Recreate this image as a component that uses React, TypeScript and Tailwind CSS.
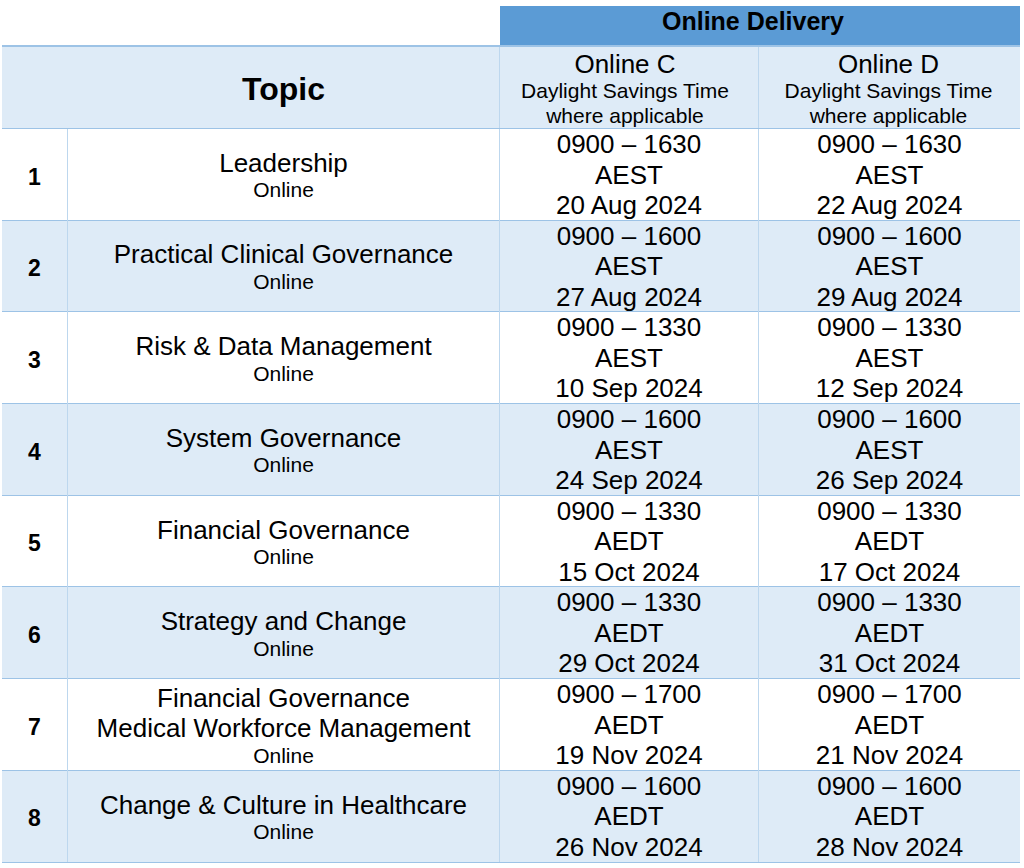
const rows = [
  { n: 1, topic: ['Leadership'], c: ['0900 – 1630', 'AEST', '20 Aug 2024'], d: ['0900 – 1630', 'AEST', '22 Aug 2024'] },
  { n: 2, topic: ['Practical Clinical Governance'], c: ['0900 – 1600', 'AEST', '27 Aug 2024'], d: ['0900 – 1600', 'AEST', '29 Aug 2024'] },
  { n: 3, topic: ['Risk & Data Management'], c: ['0900 – 1330', 'AEST', '10 Sep 2024'], d: ['0900 – 1330', 'AEST', '12 Sep 2024'] },
  { n: 4, topic: ['System Governance'], c: ['0900 – 1600', 'AEST', '24 Sep 2024'], d: ['0900 – 1600', 'AEST', '26 Sep 2024'] },
  { n: 5, topic: ['Financial Governance'], c: ['0900 – 1330', 'AEDT', '15 Oct 2024'], d: ['0900 – 1330', 'AEDT', '17 Oct 2024'] },
  { n: 6, topic: ['Strategy and Change'], c: ['0900 – 1330', 'AEDT', '29 Oct 2024'], d: ['0900 – 1330', 'AEDT', '31 Oct 2024'] },
  { n: 7, topic: ['Financial Governance', 'Medical Workforce Management'], c: ['0900 – 1700', 'AEDT', '19 Nov 2024'], d: ['0900 – 1700', 'AEDT', '21 Nov 2024'] },
  { n: 8, topic: ['Change & Culture in Healthcare'], c: ['0900 – 1600', 'AEDT', '26 Nov 2024'], d: ['0900 – 1600', 'AEDT', '28 Nov 2024'] },
];

const cols = 'grid grid-cols-[66px_432px_259px_261px]';

function TimeCell({ lines, last }: { lines: string[]; last?: boolean }) {
  return (
    <div className={`flex flex-col items-center justify-center ${last ? '' : 'border-r border-[#bdd7ee]'}`}>
      {lines.map((l) => (
        <div key={l} className="text-[26px] leading-[30.5px] whitespace-nowrap">
          {l}
        </div>
      ))}
    </div>
  );
}

export default function App() {
  return (
    <div className="min-h-[868px] bg-white pl-[2px] pt-[6px] font-['Liberation_Sans',Arial,sans-serif] text-black">
      <div className="w-[1018px]">
        {/* Online Delivery band */}
        <div className={cols}>
          <div className="col-span-2" />
          <div className="col-span-2 flex h-[39px] justify-center bg-[#5b9bd5] pt-[1px] pr-[14px]">
            <span className="text-[25px] font-bold leading-[28px]">Online Delivery</span>
          </div>
        </div>
        <div className="h-[2px] bg-[#9dc3e6]" />

        {/* Header */}
        <div className={`${cols} h-[82px] border-b border-[#9dc3e6] bg-[#deebf7]`}>
          <div />
          <div className="flex items-center justify-center border-r border-[#bdd7ee] pt-[2px]">
            <span className="text-[32px] font-bold leading-none">Topic</span>
          </div>
          <div className="flex flex-col items-center border-r border-[#bdd7ee] pt-[3px] pr-[8px]">
            <div className="text-[26px] leading-[28px]">Online C</div>
            <div className="text-[21px] leading-[26px]">Daylight Savings Time</div>
            <div className="text-[21px] leading-[24px]">where applicable</div>
          </div>
          <div className="flex flex-col items-center pt-[3px] pr-[2px]">
            <div className="text-[26px] leading-[28px]">Online D</div>
            <div className="text-[21px] leading-[26px]">Daylight Savings Time</div>
            <div className="text-[21px] leading-[24px]">where applicable</div>
          </div>
        </div>

        {/* Body */}
        {rows.map((r, i) => (
          <div
            key={r.n}
            className={`${cols} h-[91.7px] border-b border-[#9dc3e6] ${i % 2 === 1 ? 'bg-[#deebf7]' : 'bg-white'}`}
          >
            <div className="flex items-center justify-center border-r border-[#bdd7ee] pt-[4px]">
              <span className="text-[23px] font-bold">{r.n}</span>
            </div>
            <div className="flex flex-col items-center justify-center border-r border-[#bdd7ee]">
              {r.topic.map((t) => (
                <div key={t} className="text-[26px] leading-[30.5px] whitespace-nowrap">
                  {t}
                </div>
              ))}
              <div className="text-[21px] leading-[23.5px]">Online</div>
            </div>
            <TimeCell lines={r.c} />
            <TimeCell lines={r.d} last />
          </div>
        ))}
      </div>
    </div>
  );
}
